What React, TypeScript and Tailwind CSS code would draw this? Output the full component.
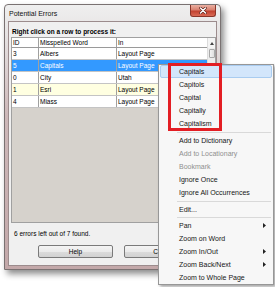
import React from 'react';

type Row = { id: string; word: string; inn: string; kind: 'n' | 's' | 'y' };

const rows: Row[] = [
  { id: '3', word: 'Albers', inn: 'Layout Page', kind: 'n' },
  { id: '5', word: 'Capitals', inn: 'Layout Page', kind: 's' },
  { id: '0', word: 'City', inn: 'Utah', kind: 'n' },
  { id: '1', word: 'Esri', inn: 'Layout Page', kind: 'y' },
  { id: '4', word: 'Miass', inn: 'Layout Page', kind: 'n' },
];

type Item =
  | { t: 'item'; label: string; hi?: boolean; dis?: boolean; arrow?: boolean }
  | { t: 'sep'; h: number };

const menu: Item[] = [
  { t: 'item', label: 'Capitals', hi: true },
  { t: 'item', label: 'Capitols' },
  { t: 'item', label: 'Capital' },
  { t: 'item', label: 'Capitally' },
  { t: 'item', label: 'Capitalism' },
  { t: 'sep', h: 4 },
  { t: 'item', label: 'Add to Dictionary' },
  { t: 'item', label: 'Add to Locationary', dis: true },
  { t: 'item', label: 'Bookmark', dis: true },
  { t: 'item', label: 'Ignore Once' },
  { t: 'item', label: 'Ignore All Occurrences' },
  { t: 'sep', h: 4 },
  { t: 'item', label: 'Edit...' },
  { t: 'sep', h: 3 },
  { t: 'item', label: 'Pan', arrow: true },
  { t: 'item', label: 'Zoom on Word' },
  { t: 'item', label: 'Zoom In/Out', arrow: true },
  { t: 'item', label: 'Zoom Back/Next', arrow: true },
  { t: 'item', label: 'Zoom to Whole Page' },
];

function Arrow() {
  return (
    <svg width="3" height="5" viewBox="0 0 3 5" className="shrink-0">
      <polygon points="0,0 3,2.5 0,5" fill="#222" />
    </svg>
  );
}

export default function App() {
  return (
    <div className="relative w-[275px] h-[287px] overflow-hidden bg-white pl-[4px] pt-[4px] font-['Liberation_Sans',Arial,sans-serif]">
      {/* Window */}
      <div className="w-[217px] h-[266px] flex flex-col border border-[#7a7272] rounded-t-[4px] bg-[linear-gradient(to_bottom,#efefef_0px,#e6e3e3_30px,#cdb8b9_110px,#c3a8a9_100%)] shadow-[3px_4px_6px_rgba(0,0,0,0.45)]">
        {/* Title bar */}
        <div className="h-[16px] flex items-start justify-between pl-[4px] pr-[4px]">
          <span className="mt-[4px] text-[7px] leading-[9px] text-[#111]">Potential Errors</span>
          <div className="w-[26px] h-[12px] flex items-center justify-center rounded-b-[3px] border border-t-0 border-[#8a3529] bg-[linear-gradient(to_bottom,#eab0a2_0%,#d9806f_45%,#c2412f_55%,#d96a55_100%)]">
            <svg width="8" height="7" viewBox="0 0 8 7">
              <path d="M1.5 1 L6.5 6 M6.5 1 L1.5 6" stroke="#5a1a12" strokeWidth="2.6" strokeLinecap="round" />
              <path d="M1.5 1 L6.5 6 M6.5 1 L1.5 6" stroke="#ffffff" strokeWidth="1.5" strokeLinecap="round" />
            </svg>
          </div>
        </div>
        {/* Client */}
        <div className="mx-[3px] h-[245px] border border-[#9c8c8d] bg-[#f0f0f0] flex flex-col">
          <div className="h-[15px] pt-[5px] pl-[3px] text-[6.5px] leading-[9px] font-bold text-black">
            Right click on a row to process it:
          </div>
          {/* List view */}
          <div className="ml-[2px] w-[205px] h-[186px] border border-[#a0a0a0] flex">
            <div className="flex-1 flex flex-col bg-[#d6d2cc]">
              <div className="h-[10px] flex bg-white border-b border-[#9a9a9a] text-[6.5px] text-black">
                <div className="w-[27px] h-full flex items-center pl-[1px] border-r border-[#a0a0a0]">ID</div>
                <div className="w-[78px] h-full flex items-center pl-[1px] border-r border-[#a0a0a0]">Misspelled Word</div>
                <div className="flex-1 h-full flex items-center pl-[1px]">In</div>
              </div>
              {rows.map((r) => {
                const bg =
                  r.kind === 's'
                    ? 'bg-[#3399ff] text-white'
                    : r.kind === 'y'
                    ? 'bg-[#ffffe1] text-black'
                    : 'bg-white text-black';
                return (
                  <div key={r.id} className={`h-[12px] flex border-b border-[#c4c4c4] text-[6.5px] ${bg}`}>
                    <div className="w-[27px] h-full flex items-center pl-[1px] border-r border-[#a0a0a0]">{r.id}</div>
                    <div className="w-[78px] h-full flex items-center pl-[1px] border-r border-[#a0a0a0]">{r.word}</div>
                    <div className="flex-1 h-full flex items-center pl-[1px]">{r.inn}</div>
                  </div>
                );
              })}
            </div>
            {/* Scrollbar */}
            <div className="w-[8px] flex flex-col bg-[#ececec] border-l border-[#dcdcdc]">
              <div className="h-[10px] flex items-center justify-center bg-[#f4f4f4]">
                <svg width="4" height="3" viewBox="0 0 4 3">
                  <polygon points="2,0 4,3 0,3" fill="#444" />
                </svg>
              </div>
              <div className="mt-[1px] mx-[0.5px] h-[9px] rounded-[1px] border border-[#a8a8a8] bg-[linear-gradient(to_right,#f3f3f3,#dedede)]" />
            </div>
          </div>
          <div className="h-[22px] pt-[6px] pl-[5px] text-[6.5px] leading-[9px] text-black">
            6 errors left out of 7 found.
          </div>
          <div className="h-[13px] flex pl-[29px] gap-[11px]">
            <div className="w-[75px] h-full flex items-center justify-center rounded-[2px] border border-[#7a7a7a] bg-[linear-gradient(to_bottom,#f4f4f4_0%,#ebebeb_50%,#dcdcdc_51%,#d2d2d2_100%)] text-[6.5px] text-black">
              Help
            </div>
            <div className="w-[75px] h-full flex items-center justify-center rounded-[2px] border border-[#7a7a7a] bg-[linear-gradient(to_bottom,#f4f4f4_0%,#ebebeb_50%,#dcdcdc_51%,#d2d2d2_100%)] text-[6.5px] text-black">
              Close
            </div>
          </div>
        </div>
      </div>

      {/* Context menu */}
      <div className="absolute left-[158px] top-[64px] w-[116px] h-[221px] border border-[#979797] bg-[#f7f7f7] shadow-[2px_2px_3px_rgba(0,0,0,0.35)] px-[1px] flex flex-col text-[7px]">
        {menu.map((m, i) => {
          if (m.t === 'sep') {
            return (
              <div key={i} className="flex items-center pl-[17px] pr-[1px]" style={{ height: m.h }}>
                <div className="w-full h-[1px] bg-[#d9d9d9]" />
              </div>
            );
          }
          const color = m.dis ? 'text-[#8f8f8f]' : 'text-[#161616]';
          const hi = m.hi
            ? 'border border-[#a9ccf0] bg-[#d3e6fb] rounded-[2px] pl-[18px] pr-[5px]'
            : 'pl-[19px] pr-[6px]';
          return (
            <div key={i} className={`h-[13px] flex items-center justify-between leading-[9px] ${hi} ${color}`}>
              <span className="-mt-[1px]">{m.label}</span>
              {m.arrow ? <Arrow /> : null}
            </div>
          );
        })}
      </div>

      {/* Red highlight box */}
      <div className="absolute left-[168px] top-[63px] w-[54px] h-[68px] border-[3px] border-[#e31e24]" />
    </div>
  );
}
